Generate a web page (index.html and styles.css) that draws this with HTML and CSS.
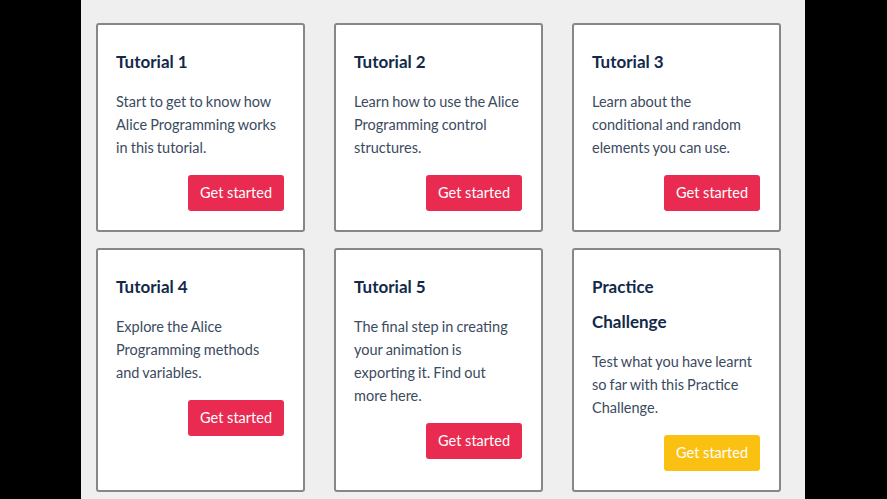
FILE: index.html
```html
<!DOCTYPE html>
<html>
<head>
<meta charset="utf-8">
<link rel="stylesheet" href="styles.css">
</head>
<body>
<div class="stage">
  <div class="grid">
    <div class="card">
      <h3 class="title">Tutorial 1</h3>
      <p class="desc">Start to get to know how Alice Programming works in this tutorial.</p>
      <div class="actions"><a class="btn">Get started</a></div>
    </div>
    <div class="card">
      <h3 class="title">Tutorial 2</h3>
      <p class="desc">Learn how to use the Alice Programming control structures.</p>
      <div class="actions"><a class="btn">Get started</a></div>
    </div>
    <div class="card">
      <h3 class="title">Tutorial 3</h3>
      <p class="desc">Learn about the conditional and random elements you can use.</p>
      <div class="actions"><a class="btn">Get started</a></div>
    </div>
    <div class="card">
      <h3 class="title">Tutorial 4</h3>
      <p class="desc">Explore the Alice Programming methods and variables.</p>
      <div class="actions"><a class="btn">Get started</a></div>
    </div>
    <div class="card">
      <h3 class="title">Tutorial 5</h3>
      <p class="desc">The final step in creating your animation is exporting it. Find out more here.</p>
      <div class="actions"><a class="btn">Get started</a></div>
    </div>
    <div class="card">
      <h3 class="title">Practice<br>Challenge</h3>
      <p class="desc">Test what you have learnt so far with this Practice Challenge.</p>
      <div class="actions"><a class="btn btn-yellow">Get started</a></div>
    </div>
  </div>
</div>
</body>
</html>
```
FILE: styles.css
```css
html, body {
  margin: 0;
  padding: 0;
  background: #000;
  height: 100%;
}
body {
  font-family: "Lato", "Open Sans", sans-serif;
}
.stage {
  margin-left: 81px;
  width: 724px;
  height: 499px;
  background: #efefef;
  padding: 23px 0 0 15px;
  box-sizing: border-box;
  overflow: hidden;
}
.grid {
  display: grid;
  grid-template-columns: 209px 209px 209px;
  column-gap: 29px;
  row-gap: 16px;
  align-items: stretch;
}
.card {
  background: #fff;
  border: 2px solid #878787;
  border-radius: 3px;
  padding: 19px 19px 19px 18px;
  box-sizing: border-box;
  min-height: 209px;
}
.title {
  margin: 0;
  font-size: 17px;
  font-weight: 700;
  line-height: 35px;
  color: #12294a;
}
.desc {
  margin: 11px 2px 16px 0;
  font-size: 14.5px;
  line-height: 23px;
  word-spacing: -0.6px;
  color: #3b4b60;
}
.actions {
  display: flex;
  justify-content: flex-end;
}
.btn {
  display: inline-block;
  height: 36px;
  line-height: 36px;
  padding: 0 12px;
  background: #e92b51;
  color: #fff;
  font-size: 14.5px;
  border-radius: 3px;
}
.btn-yellow {
  background: #fbc112;
}
```
